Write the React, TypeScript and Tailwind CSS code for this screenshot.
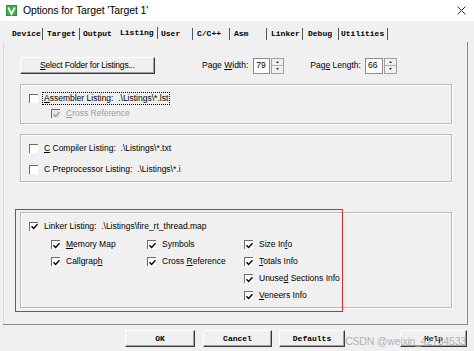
import React from "react";

const sans = "font-['Liberation_Sans',Arial,sans-serif]";
const mono = "font-['Liberation_Mono','Courier_New',monospace]";

function Check({ checked, disabled }: { checked?: boolean; disabled?: boolean }) {
  return (
    <span
      className={`relative flex h-[9px] w-[9px] shrink-0 items-center justify-center border-l border-t border-[#6d6d6d] ${
        disabled ? "bg-[#e6e6e6]" : "bg-white"
      }`}
    >
      {checked && (
        <svg width="7" height="7" viewBox="0 0 7 7">
          <path
            d="M0.5 3.2 L2.6 5.4 L6.5 1.2"
            fill="none"
            stroke={disabled ? "#9a9a9a" : "#000"}
            strokeWidth="1.4"
          />
        </svg>
      )}
    </span>
  );
}

function U({ children }: { children: React.ReactNode }) {
  return <span className="underline underline-offset-1">{children}</span>;
}

function Option({
  checked,
  disabled,
  focus,
  children,
}: {
  checked?: boolean;
  disabled?: boolean;
  focus?: boolean;
  children: React.ReactNode;
}) {
  return (
    <div className="flex items-center gap-[4px]">
      <Check checked={checked} disabled={disabled} />
      <span
        className={`${disabled ? "text-[#9c9c9c]" : "text-black"} ${
          focus ? "border border-dotted border-black px-[1px]" : "px-[2px]"
        } whitespace-nowrap leading-[11px]`}
      >
        {children}
      </span>
    </div>
  );
}

function Group({ className, children }: { className?: string; children?: React.ReactNode }) {
  return (
    <div
      className={`w-[432px] border border-[#b9b9b9] shadow-[inset_1px_1px_0_#fff,1px_1px_0_#fff] ${className ?? ""}`}
    >
      {children}
    </div>
  );
}

function Spin() {
  return (
    <div className="flex h-[16px] w-[13px] flex-col border border-[#a0a0a0] bg-[#f0f0f0]">
      <div className="flex flex-1 items-center justify-center border-b border-[#b0b0b0]">
        <svg width="3" height="2" viewBox="0 0 3 2">
          <path d="M1.5 0 L3 2 L0 2 Z" fill="#333" />
        </svg>
      </div>
      <div className="flex flex-1 items-center justify-center">
        <svg width="3" height="2" viewBox="0 0 3 2">
          <path d="M0 0 L3 0 L1.5 2 Z" fill="#333" />
        </svg>
      </div>
    </div>
  );
}

function Btn({ w, children }: { w: string; children: React.ReactNode }) {
  return (
    <div
      className={`${w} flex h-[17px] items-center justify-center border border-b-[#3a3a3a] border-l-white border-r-[#3a3a3a] border-t-white bg-[#f0f0f0] shadow-[inset_-1px_-1px_0_#a0a0a0] ${mono} text-[8px] font-bold text-black`}
    >
      {children}
    </div>
  );
}

const tabs = [
  { t: "Device", w: "w-[32px]", pl: "pl-[1px]" },
  { t: "Target", w: "w-[37px]", pl: "pl-[4px]" },
  { t: "Output", w: "w-[36px]", pl: "pl-[3px]", noSep: true },
  { t: "Listing", w: "w-[42px]", pl: "pl-[4px]", active: true },
  { t: "User", w: "w-[35px]", pl: "pl-[3px]" },
  { t: "C/C++", w: "w-[37px]", pl: "pl-[4px]" },
  { t: "Asm", w: "w-[37px]", pl: "pl-[4px]" },
  { t: "Linker", w: "w-[36px]", pl: "pl-[4px]" },
  { t: "Debug", w: "w-[36px]", pl: "pl-[5px]" },
  { t: "Utilities", w: "w-[49px]", pl: "pl-[2px]" },
];

export default function App() {
  return (
    <div className={`relative flex h-[351px] w-[474px] flex-col overflow-hidden bg-[#f0f0f0] ${sans} text-[8.5px] text-black`}>
      {/* title bar */}
      <div className="flex h-[21px] shrink-0 items-center bg-white pl-[6px] pr-[8px]">
        <svg width="11" height="11" viewBox="0 0 11 11">
          <rect width="11" height="11" fill="#2f8f3a" />
          <rect x="1" y="1" width="9" height="9" fill="#3fae4a" />
          <path d="M2.2 2.5 L5.5 9 L8.8 2.5" fill="none" stroke="#fff" strokeWidth="1.8" />
        </svg>
        <span className="ml-[6px] text-[10.5px] tracking-[-0.1px]">Options for Target 'Target 1'</span>
        <svg className="ml-auto" width="9" height="9" viewBox="0 0 9 9">
          <path d="M0.5 0.5 L8.5 8.5 M8.5 0.5 L0.5 8.5" stroke="#333" strokeWidth="1" />
        </svg>
      </div>

      {/* tabs */}
      <div className={`flex h-[21px] shrink-0 items-center pl-[11px] pt-[4px] ${mono} text-[8px] font-bold`}>
        {tabs.map((tab) => (
          <div
            key={tab.t}
            className={`${tab.w} ${tab.pl} flex h-[12px] items-center ${
              tab.noSep ? "" : "border-r border-[#555]"
            } ${tab.active ? "-mt-[2px]" : ""}`}
          >
            {tab.t}
          </div>
        ))}
      </div>

      {/* panel */}
      <div className="ml-[3px] h-[283px] w-[465px] shrink-0 border-b border-r border-[#8a8a8a] pl-[17px] pt-[15px] shadow-[inset_1px_0_0_#dcdcdc]">
        <div className="flex h-[17px] items-center">
          <Btn w="w-[135px]">
            <span className={`${sans} text-[8.5px] font-normal tracking-[-0.2px]`}>
              <U>S</U>elect Folder for Listings...
            </span>
          </Btn>
          <span className="ml-[47px] whitespace-nowrap">
            Page <U>W</U>idth:
          </span>
          <div className="ml-[5px] flex h-[16px] w-[17px] items-center border border-[#8a8a8a] bg-white pl-[2px]">79</div>
          <div className="ml-[1px]">
            <Spin />
          </div>
          <span className="ml-[26px] whitespace-nowrap">
            Pag<U>e</U> Length:
          </span>
          <div className="ml-[4px] flex h-[16px] w-[18px] items-center border border-[#8a8a8a] bg-white pl-[2px]">66</div>
          <div className="ml-[1px]">
            <Spin />
          </div>
        </div>

        <Group className="mt-[10px] h-[40px] pl-[8px] pt-[6px]">
          <div className="flex h-[15px] items-center">
            <Option focus>
              <U>A</U>ssembler Listing:&nbsp;&nbsp;.\Listings\*.lst
            </Option>
          </div>
          <div className="flex h-[15px] items-center pl-[22px]">
            <Option checked disabled>
              <U>C</U>ross Reference
            </Option>
          </div>
        </Group>

        <Group className="mt-[10px] flex h-[48px] flex-col gap-[5px] pl-[8px] pt-[5px]">
          <div className="flex h-[16px] items-center">
            <Option>
              <U>C</U> Compiler Listing:&nbsp;&nbsp;.\Listings\*.txt
            </Option>
          </div>
          <div className="flex h-[16px] items-center">
            <Option>C Preprocessor Listing:&nbsp;&nbsp;.\Listings\*.i</Option>
          </div>
        </Group>

        <div className="relative mt-[30px]">
          <Group className="h-[96px] pl-[8px] pt-[5px]">
            <div className="flex h-[16px] items-center">
              <Option checked>Linker Listing:&nbsp;&nbsp;.\Listings\fire_rt_thread.map</Option>
            </div>
            <div className="mt-[2px] grid grid-cols-[96px_97px_1fr] pl-[22px]">
              <div className="flex h-[17px] items-center">
                <Option checked>
                  <U>M</U>emory Map
                </Option>
              </div>
              <div className="flex h-[17px] items-center">
                <Option checked>Symbols</Option>
              </div>
              <div className="flex h-[17px] items-center">
                <Option checked>
                  Size In<U>f</U>o
                </Option>
              </div>
              <div className="flex h-[17px] items-center">
                <Option checked>
                  Callgrap<U>h</U>
                </Option>
              </div>
              <div className="flex h-[17px] items-center">
                <Option checked>
                  Cross <U>R</U>eference
                </Option>
              </div>
              <div className="flex h-[17px] items-center">
                <Option checked>
                  <U>T</U>otals Info
                </Option>
              </div>
              <div className="col-start-3 flex h-[17px] items-center">
                <Option checked>
                  Unuse<U>d</U> Sections Info
                </Option>
              </div>
              <div className="col-start-3 flex h-[17px] items-center">
                <Option checked>
                  <U>V</U>eneers Info
                </Option>
              </div>
            </div>
          </Group>
          {/* red annotation frame */}
          <div className="pointer-events-none absolute -left-[5px] -top-[3px] h-[103px] w-[328px] border-[1.5px] border-[#e3262b]" />
        </div>
      </div>

      {/* bottom buttons */}
      <div className="mt-[5px] flex pl-[125px]">
        <Btn w="w-[70px]">OK</Btn>
        <div className="ml-[8px]">
          <Btn w="w-[69px]">Cancel</Btn>
        </div>
        <div className="ml-[7px]">
          <Btn w="w-[66px]">Defaults</Btn>
        </div>
        <div className="ml-[55px]">
          <Btn w="w-[67px]">Help</Btn>
        </div>
      </div>

      {/* watermark */}
      <div className="pointer-events-none absolute bottom-[5px] right-[8px] text-[10.5px] leading-none tracking-[-0.2px] text-[#a8a8a8]/90">
        CSDN @weixin_42734533
      </div>
    </div>
  );
}
